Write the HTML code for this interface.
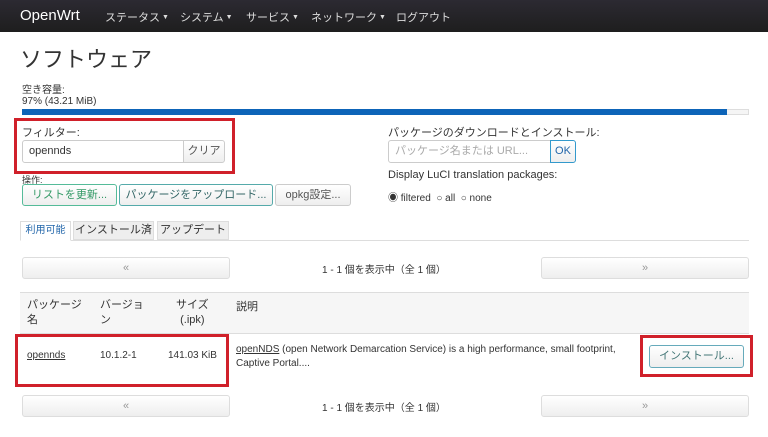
<!DOCTYPE html>
<html><head><meta charset="utf-8"><style>
*{box-sizing:border-box;margin:0;padding:0}
body{width:768px;height:437px;background:#fff;font-family:"Liberation Sans","Noto Sans CJK JP",sans-serif;color:#333;position:relative;overflow:hidden;font-size:11px}
.a{position:absolute;white-space:nowrap}
.nav{position:absolute;left:0;top:0;width:768px;height:32px;background:linear-gradient(#2c2a32,#1e1e1e);}
.nav span{position:absolute;top:9px;color:#ddd;font-size:11px}
.nav i{font-style:normal;font-size:7px;vertical-align:2px;margin-left:2px}
.btn{position:absolute;border:1px solid #ccc;border-radius:3px;background:linear-gradient(#fff,#eee);text-align:center;font-size:11px;color:#555}
.red{position:absolute;border:3px solid #d0202a}
.in{position:absolute;border:1px solid #ccc;border-radius:3px 0 0 3px;background:#fff;font-size:11px;padding:0 6px;line-height:21px}
</style></head><body>
<div class="nav">
<span style="left:20px;top:7px;font-size:15px;color:#fff">OpenWrt</span>
<span style="left:105px">ステータス<i>▼</i></span>
<span style="left:180px">システム<i>▼</i></span>
<span style="left:246px">サービス<i>▼</i></span>
<span style="left:311px">ネットワーク<i>▼</i></span>
<span style="left:396px">ログアウト</span>
</div>
<div class="a" style="left:20px;top:42px;font-size:22px;color:#333">ソフトウェア</div>
<div class="a" style="left:22px;top:81px;font-size:10px">空き容量:</div>
<div class="a" style="left:22px;top:96px;font-size:10px">97% (43.21 MiB)</div>
<div class="a" style="left:22px;top:109px;width:727px;height:6px;border:1px solid #ddd;background:#f5f5f5"></div>
<div class="a" style="left:22px;top:109px;width:705px;height:6px;background:#0d64b8"></div>
<div class="a" style="left:22px;top:124px;font-size:11px">フィルター:</div>
<div class="in" style="left:22px;top:140px;width:162px;height:23px">opennds</div>
<div class="btn" style="left:183px;top:140px;width:42px;height:23px;line-height:21px;border-radius:0 3px 3px 0">クリア</div>
<div class="red" style="left:14px;top:118px;width:221px;height:56px"></div>
<div class="a" style="left:388px;top:124px;font-size:11px">パッケージのダウンロードとインストール:</div>
<div class="in" style="left:388px;top:140px;width:163px;height:23px;color:#aaa">パッケージ名または URL...</div>
<div class="btn" style="left:550px;top:140px;width:26px;height:23px;line-height:21px;border-color:#39c;color:#26a;border-radius:0 3px 3px 0">OK</div>
<div class="a" style="left:22px;top:173px;font-size:9px">操作:</div>
<div class="btn" style="left:22px;top:184px;width:95px;height:22px;line-height:20px;border-color:#5b9;color:#396">リストを更新...</div>
<div class="btn" style="left:119px;top:184px;width:154px;height:22px;line-height:20px;border-color:#5aa;color:#366">パッケージをアップロード...</div>
<div class="btn" style="left:275px;top:184px;width:76px;height:22px;line-height:20px">opkg設定...</div>
<div class="a" style="left:388px;top:169px;font-size:11px">Display LuCI translation packages:</div>
<div class="a" style="left:388px;top:189px;font-size:10px">◉ filtered &nbsp;○ all &nbsp;○ none</div>
<div class="a" style="left:20px;top:240px;width:729px;border-top:1px solid #ddd"></div>
<div class="a" style="left:20px;top:221px;width:51px;height:20px;border:1px solid #ddd;border-bottom-color:#fff;background:#fff;color:#26a;font-size:10px;text-align:center;line-height:18px">利用可能</div>
<div class="a" style="left:73px;top:221px;width:81px;height:19px;border:1px solid #ddd;background:#eee;font-size:11px;text-align:center;line-height:17px">インストール済</div>
<div class="a" style="left:157px;top:221px;width:72px;height:19px;border:1px solid #ddd;background:#eee;font-size:11px;text-align:center;line-height:17px">アップデート</div>
<div class="btn" style="left:22px;top:257px;width:208px;height:22px;line-height:20px;color:#999;border-color:#ddd">«</div>
<div class="a" style="left:322px;top:261px;font-size:10px">1 - 1 個を表示中（全 1 個）</div>
<div class="btn" style="left:541px;top:257px;width:208px;height:22px;line-height:20px;color:#999;border-color:#ddd">»</div>
<div class="a" style="left:20px;top:292px;width:729px;height:42px;background:#f6f6f6;border-top:1px solid #ddd;border-bottom:1px solid #ddd"></div>
<div class="a" style="left:27px;top:298px;font-size:11px;line-height:15px">パッケージ<br>名</div>
<div class="a" style="left:100px;top:298px;font-size:11px;line-height:15px">バージョ<br>ン</div>
<div class="a" style="left:176px;top:298px;font-size:11px;line-height:15px;text-align:center">サイズ<br>(.ipk)</div>
<div class="a" style="left:236px;top:298px;font-size:11px">説明</div>
<div class="a" style="left:27px;top:350px;font-size:10px;text-decoration:underline">opennds</div>
<div class="a" style="left:100px;top:350px;font-size:10px">10.1.2-1</div>
<div class="a" style="left:168px;top:350px;font-size:10px">141.03 KiB</div>
<div class="a" style="left:236px;top:343px;font-size:10px;line-height:14px"><u>openNDS</u> (open Network Demarcation Service) is a high performance, small footprint,<br>Captive Portal....</div>
<div class="red" style="left:15px;top:334px;width:214px;height:53px"></div>
<div class="btn" style="left:649px;top:345px;width:95px;height:23px;line-height:21px;border-color:#6ab;color:#477">インストール...</div>
<div class="red" style="left:640px;top:335px;width:113px;height:42px"></div>
<div class="btn" style="left:22px;top:395px;width:208px;height:22px;line-height:20px;color:#999;border-color:#ddd">«</div>
<div class="a" style="left:322px;top:399px;font-size:10px">1 - 1 個を表示中（全 1 個）</div>
<div class="btn" style="left:541px;top:395px;width:208px;height:22px;line-height:20px;color:#999;border-color:#ddd">»</div>
</body></html>
